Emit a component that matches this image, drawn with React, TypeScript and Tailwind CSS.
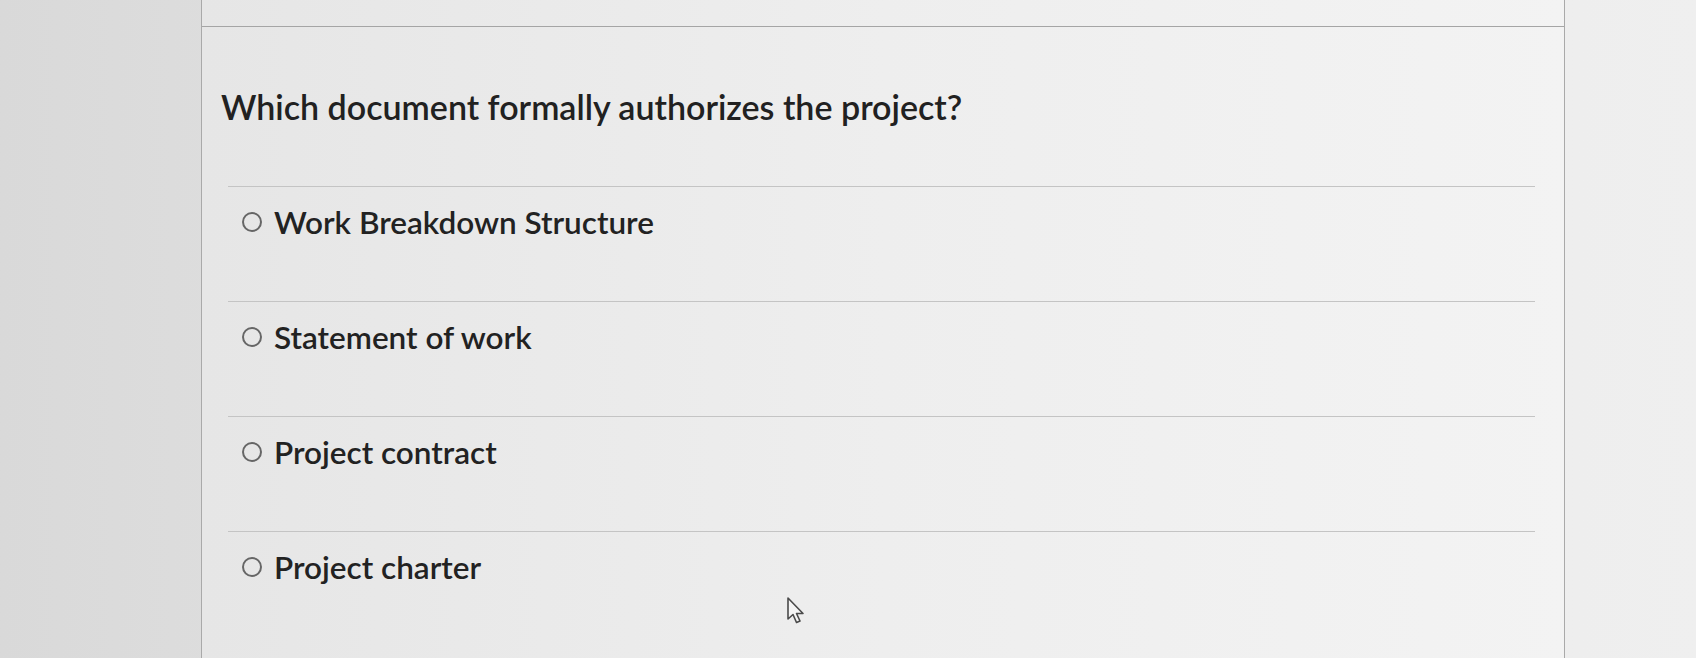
import React from 'react';

const options = [
  'Work Breakdown Structure',
  'Statement of work',
  'Project contract',
  'Project charter',
];

function Cursor() {
  return (
    <svg
      className="absolute left-[786px] top-[596px]"
      width="22"
      height="30"
      viewBox="0 0 22 30"
    >
      <path
        d="M2 2 L2 23 L7 18.5 L10.5 26.5 L14 25 L10.5 17.5 L17 17.5 Z"
        fill="#f4f4f4"
        stroke="#4a4a4a"
        strokeWidth="1.6"
        strokeLinejoin="round"
      />
    </svg>
  );
}

export default function App() {
  return (
    <div
      className="relative h-[658px] w-[1696px] overflow-hidden bg-gradient-to-r from-[#d9d9d9] via-[#e8e8e8] to-[#efefef]"
      style={{ fontFamily: 'Lato, "Open Sans", sans-serif' }}
    >
      <div className="ml-[201px] flex h-full w-[1364px] flex-col border-x border-[#a9a9a9] bg-gradient-to-r from-[#e6e6e6] via-[#eeeeee] to-[#f3f3f3]">
        <div className="h-[27px] border-b border-[#a5a5a5]" />

        <div className="px-[19px] pt-[60px] pb-[59px]">
          <h2 className="text-[34px] font-semibold leading-[40px] text-[#212121]">
            Which document formally authorizes the project?
          </h2>
        </div>

        <div className="pl-[26px] pr-[29px]">
          {options.map((label) => (
            <div key={label} className="border-t border-[#c4c4c4] pt-[16px] pb-[60px]">
              <label className="flex items-center gap-[12px] pl-[14px]">
                <span className="h-[20px] w-[20px] shrink-0 rounded-full border-[2px] border-[#666666]" />
                <span className="text-[31.5px] font-semibold leading-[38px] text-[#222222]">
                  {label}
                </span>
              </label>
            </div>
          ))}
        </div>
      </div>
      <Cursor />
    </div>
  );
}
